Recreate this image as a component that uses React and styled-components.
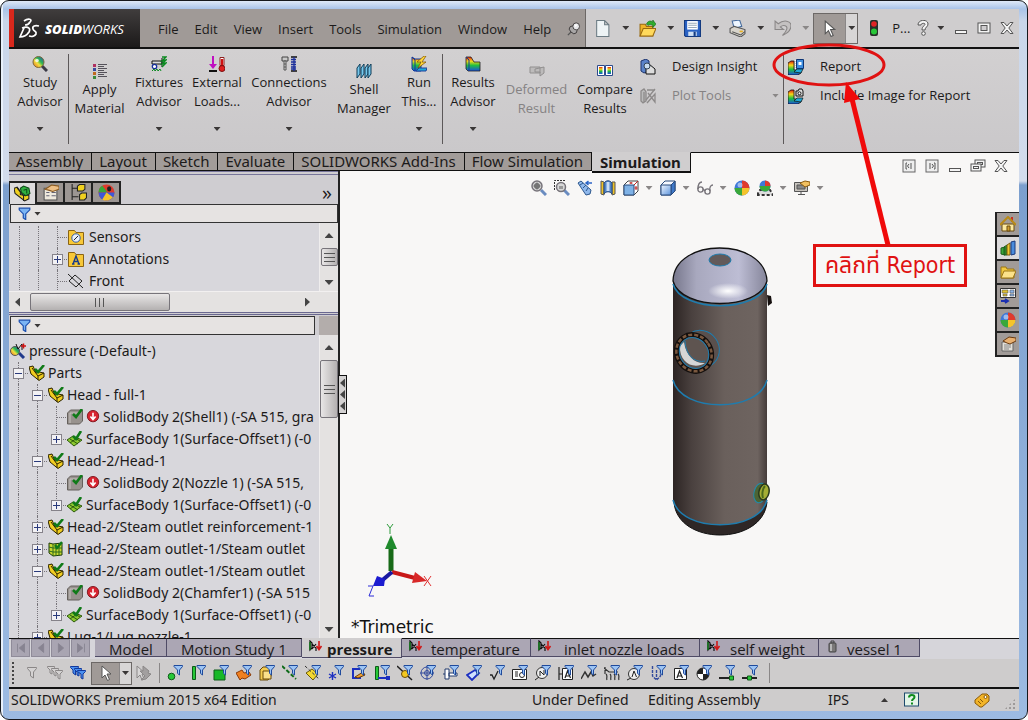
import React from 'react';
import styled, { createGlobalStyle, css } from 'styled-components';

const Global = createGlobalStyle`
  html, body, #root { height: 100%; }
  body { margin: 0; background: #fff; color: #1c1a1a; font: 14px/20px "Open Sans", "Noto Sans", sans-serif; }
  * { box-sizing: border-box; }
  button { font: inherit; color: inherit; border: 0; background: none; padding: 0; margin: 0; }
  svg { display: block; flex: none; }
`;

/* ---------- icons ---------- */

const Funnel = () => (
  <path d="M7 .5h8.500v1L12.500 5v5l-2-1.600V5L7 1.500z" fill="#9cc4f4" stroke="#1f4a9c" />
);

const icons = {
  study: <><path d="M10 10l5 5" stroke="#3b3b46" strokeWidth="3" /><circle cx="6.500" cy="6" r="5.500" fill="url(#rainbow)" stroke="#7a6a3a" /><circle cx="5" cy="4.500" r="1.800" fill="#fff" opacity=".8" /></>,
  material: <><path d="M6 1.500h9M6 5.500h9M6 9.500h9M6 13.500h9M6 3.500h6M6 7.500h6M6 11.500h6" stroke="#55525a" /><rect x="1" y="1" width="3" height="3" fill="#b03060" /><rect x="1" y="5" width="3" height="3" fill="#3a4aa0" /><rect x="1" y="9" width="3" height="3" fill="#c06a20" /><rect x="1" y="13" width="3" height="3" fill="#3a8a3a" /></>,
  fixtures: <><path d="M1 5h10v3H1zM11 2v9" fill="#ddd" stroke="#111" /><path d="M11 1h4l-4 4 4-1-4 4 4-1-4 4" fill="none" stroke="#0b8a20" strokeWidth="1.400" /><circle cx="3.500" cy="10.500" r="2.200" fill="#fff" stroke="#16309c" strokeWidth="1.300" /><path d="M1 15l2-2 1 2 2-2 1 2 2-2 1 2" fill="none" stroke="#0b8a20" /></>,
  loads: <><path d="M4 0v10" stroke="#c010c0" strokeWidth="2" /><path d="M0 8h8l-4 5z" fill="#c010c0" /><path d="M0 15h8" stroke="#111" strokeWidth="2" /><path d="M11 1.500h4v8h-4z" fill="#fff" stroke="#8a2020" /><path d="M13 3v8" stroke="#d01010" strokeWidth="2.400" /><circle cx="13" cy="12.500" r="3" fill="#e02020" stroke="#7a1010" /></>,
  connections: <><path d="M1 1h6v4H1z" fill="#c9c9c9" stroke="#444" /><path d="M3 5h2v9H3zM3 8h2M3 11h2" fill="#ddd" stroke="#555" /><path d="M10 1h6M10 15h6" stroke="#111" strokeWidth="1.500" /><path d="M13 1v14M10 3.500h5M10 6h5M10 8.500h5M10 11h5M10 13h5" stroke="#1c2f9c" strokeWidth="1.300" /></>,
  shell: <g fill="#76c8ec" stroke="#0e3b57"><path d="M1 5l3-4v10l-3 4z" /><path d="M5 5l3-4v10l-3 4z" /><path d="M9 5l3-4v10l-3 4z" /><path d="M12 5l3-4v10l-3 4z" /></g>,
  run: <><path d="M1 1l3 2h6v12H3l-2-2z" fill="url(#heat)" stroke="#103a9c" /><path d="M5 15h10l1-3H8z" fill="#1ea8d8" stroke="#20409c" /><path d="M1 1l3 3v11" fill="none" stroke="#103a9c" /><path d="M13 0L6 6h4l-3 6 8-6h-4l4-6z" fill="#ffd83a" stroke="#7a4a00" strokeWidth=".7" /></>,
  results: <><path d="M1 1h5l3 5h6v9H3l-2-2z" fill="url(#heat)" stroke="#222" strokeWidth=".8" /><path d="M1 1l3 3v11" fill="none" stroke="#123a9c" /></>,
  deformed: <path d="M1 4h10v6H1zM6 6l9-2v6l-4 3v-4L6 9z" fill="#bdbbbb" stroke="#918f8f" />,
  compare: <><path d="M.5 2.500h7v10h-7zM8.500 2.500h7v10h-7z" fill="#fff" stroke="#2c4a8c" /><rect x="2" y="4" width="3.500" height="7" fill="url(#heat)" /><rect x="10.500" y="4" width="3.500" height="7" fill="url(#heat)" /></>,
  insight: <><path d="M1 2l5-2 3 2v10l-5 2-3-2z" fill="#5a82c8" stroke="#1c326c" /><path d="M6 8l3-3 6 5v5H6z" fill="#ddd" stroke="#111" /><circle cx="7" cy="7" r="3" fill="#c8dcf0" stroke="#345" /></>,
  plottools: <g stroke="#8d8a8a" fill="none" strokeWidth="1.300"><path d="M1 3l3-2 2 3v9l-3 2-2-2zM4 4v10" fill="#bbb" /><path d="M7 15l8-9v8l-7-9M7 2h8M15 1L6 12" /></g>,
  report: <><path d="M0 4l3-2h3v9h7v3l-3 2H0z" fill="url(#heat)" stroke="#111" strokeWidth=".8" /><path d="M6 13l3-3h6l-2 4z" fill="#1ea8d8" stroke="#111" strokeWidth=".7" /><path d="M8.500.5h7v9h-7z" fill="#3f8fe0" stroke="#0c3474" /><path d="M10.500 3h3v3h-3z" fill="#fff" /><path d="M7.500 1v9" stroke="#fff" strokeDasharray="1 1" /></>,
  image: <><path d="M0 4l3-2h3v9h7v3l-3 2H0z" fill="url(#heat)" stroke="#111" strokeWidth=".8" /><path d="M6 13l3-3h6l-2 4z" fill="#1ea8d8" stroke="#111" strokeWidth=".7" /><path d="M8 3h2l1-2h3l1 2v5H8z" fill="#ddd" stroke="#111" /><circle cx="11.500" cy="5.300" r="1.500" fill="#fff" stroke="#111" /></>,
  pin: <><path d="M1 15l5-5" stroke="#555" strokeWidth="1.500" /><ellipse cx="7" cy="9" rx="5" ry="3.500" transform="rotate(45 7 9)" fill="#a8a6a6" stroke="#3a3737" /><ellipse cx="10.500" cy="5" rx="3.800" ry="4" fill="#e8e8ea" stroke="#3a3737" /><path d="M9 5l2-2" stroke="#fff" strokeWidth="2" /></>,
  newdoc: <path d="M2.500.5H10l4 4v11H2.500zM10 .5v4h4" fill="#eef4f6" stroke="#6c7c84" />,
  open: <><path d="M1 4h5l1 2h6v9H1z" fill="#f0b428" stroke="#9a6a10" /><path d="M1 15l3-7h12l-3 7z" fill="#ffd95c" stroke="#9a6a10" /><path d="M7 4c1-3 4-4 6-2V0l3 4-3 3V5c-2-1-3-1-4 0z" fill="#2fae2f" stroke="#146a14" strokeWidth=".6" /></>,
  save: <><path d="M.5.5h15v15h-14l-1-1z" fill="#2a62c4" stroke="#143a80" /><path d="M3 1h10v8H3z" fill="#fff" /><path d="M4 3h8M4 5h8M4 7h8" stroke="#9ab" /><path d="M4 11h8v4H4z" fill="#cfe0f4" /><path d="M9 11h2v4H9z" fill="#143a80" /></>,
  print: <><path d="M3 1l7-1 2 6-7 2z" fill="#eef6ff" stroke="#456a9c" /><path d="M1 8l4-2 10 3v4l-4 3-10-4z" fill="#d8d4cc" stroke="#555" /><path d="M3 11l8 3 4-3" stroke="#555" fill="none" /><rect x="10" y="10" width="3" height="1.500" fill="#e8b020" /></>,
  undo: <path d="M1 1v8h8L6 6.500c3-2.500 7-1 6 2-.5 2-2 4-4 6 5-2 8-5 8-9 0-5-7-6-12-2z" fill="#c4c1c1" stroke="#8a8787" />,
  cursor: <path d="M4 1v12l3-3 2.500 5.500 2-1L9 9h4z" fill="#fff" stroke="#555" />,
  cursors: <g fill="#a29f9f" stroke="#8a8787"><path d="M1 1v12l3-3 2 5 2-1-2-5h4z" fill="#d8d6d6" /><path d="M7 1v5H4l5 5-4 4 5-1 5-5-3-1 1-2z" /></g>,
  traffic: <><rect x="4" y="0" width="8" height="16" rx="2" fill="#26302a" /><circle cx="8" cy="4" r="2.800" fill="#e02424" /><circle cx="8" cy="11.500" r="3" fill="#28c838" /></>,
  help: <><path d="M3 5c0-6 10-6 10-1 0 3-3 3-3 6H7c0-4 3-4 3-6 0-1-4-1-4 1z" fill="#f4f4f4" stroke="#555" /><circle cx="8.500" cy="13.500" r="1.800" fill="#f4f4f4" stroke="#555" /></>,
  min: <rect x="2.500" y="10.500" width="11" height="3" fill="#f4f4f4" stroke="#555" />,
  max: <><rect x="2" y="3" width="12" height="10" fill="#f4f4f4" stroke="#555" /><rect x="5" y="5.500" width="6" height="5" fill="#cfcdcf" stroke="#555" /></>,
  close: <path d="M2 2.500h3L8 6l3-3.500h3L9.800 8l4.200 5.500h-3L8 10l-3 3.500H2L6.200 8z" fill="#f4f4f4" stroke="#555" />,
  paneL: <><rect x="2" y="2" width="12" height="12" fill="#eee" stroke="#666" /><path d="M6 5H5v6h1M10 5v6M8 6L6.500 8 8 10" fill="none" stroke="#555" /></>,
  paneR: <><rect x="2" y="2" width="12" height="12" fill="#eee" stroke="#666" /><path d="M10 5h1v6h-1M6 5v6M8 6l1.500 2L8 10" fill="none" stroke="#555" /></>,
  restore: <g fill="#f4f4f4" stroke="#555"><rect x="5" y="2" width="10" height="7" /><rect x="7.500" y="4.500" width="5" height="2" /><rect x="1" y="6" width="10" height="7" /><rect x="3.500" y="8.500" width="5" height="2" /></g>,
  zoomfit: <><path d="M10 10l5 5" stroke="#6a8cc0" strokeWidth="3" /><circle cx="6" cy="6" r="5" fill="#d8d8d8" stroke="#77747a" strokeWidth="1.500" /><path d="M4 4h4v4H4zM6 2.500v7M2.500 6h7" stroke="#555" fill="none" /></>,
  zoomarea: <><path d="M10 10l5 5" stroke="#6a8cc0" strokeWidth="3" /><circle cx="7" cy="7" r="4.500" fill="#d8d8d8" stroke="#77747a" strokeWidth="1.500" /><path d="M.5 10V.5H12" fill="none" stroke="#333" strokeDasharray="2 1" /><path d="M5 6h4v3H5z" fill="#999" /></>,
  prev: <><path d="M1 3l3-2 10 9-1 4-4 1z" fill="#8fb8ec" stroke="#2c568c" /><path d="M3 5l3-2M6 8l3-3M9 11l2-3" stroke="#2c568c" /><path d="M15 3H10M11.500 1L9 3l2.500 2" fill="none" stroke="#2c66c8" strokeWidth="1.500" /></>,
  section: <><path d="M1 1l3 1v13l-3-1zM12 2h3v12l-3 1z" fill="#f0c428" stroke="#555" /><path d="M4 3c2-3 6-3 8 0v11c-2-3-6-3-8 0z" fill="#4f83c8" stroke="#284a7c" /><path d="M8 2v9" stroke="#c8dcf4" strokeWidth="3" /></>,
  orient: <><path d="M1 5l4-4h10v10l-4 4H1z" fill="#fff" stroke="#444" /><path d="M1 5h10v10H1z" fill="#7fb2e6" stroke="#284a7c" /><path d="M11 5l4-4M8 2v2M13 6v4M11.500 8h3M6.500 3h3" stroke="#c02020" /></>,
  cube: <><path d="M1 5l4-4h10v10l-4 4H1z" fill="#f6f9ff" stroke="#284a7c" /><path d="M11 5l4-4v10l-4 4z" fill="#3f78c8" stroke="#284a7c" /><path d="M1 5h10v10H1z" fill="url(#sheen)" stroke="#284a7c" /></>,
  glasses: <g fill="none" stroke="#77747a" strokeWidth="1.400"><circle cx="3.500" cy="9.500" r="2.600" /><circle cx="10.500" cy="11.500" r="2.600" /><path d="M1 9c0-4 1-7 4-7M6 9l2 2M13 11c-1-4 1-6 3-6" /></g>,
  ball: <><circle cx="8" cy="8" r="7.500" fill="#3f78d8" /><path d="M8 8V.5A7.500 7.500 0 0115.500 8z" fill="#e03a2c" /><path d="M8 8h7.500A7.500 7.500 0 018 15.500z" fill="#f4c42c" /><path d="M8 8v7.500A7.500 7.500 0 01.5 8z" fill="#3aa83a" /><circle cx="6" cy="5" r="2.500" fill="#fff" opacity=".5" /></>,
  scene: <><path d="M0 15l3-5h10l3 5z" fill="#ddd" stroke="#333" strokeDasharray="3 2" strokeWidth="2" /><circle cx="8" cy="6" r="5.500" fill="#3f78d8" /><path d="M8 6V.5A5.500 5.500 0 0113.500 6z" fill="#e03a2c" /><path d="M8 6v5.500A5.500 5.500 0 012.500 6zM8 6h5.500A5.500 5.500 0 018 11.500z" fill="#3aa83a" /></>,
  display: <><path d="M.5 2.500h13v9H.5z" fill="#c8c4be" stroke="#555" /><path d="M3 5h8v4H3zM4 14.500h7M7 11v3" fill="#888" stroke="#555" /><path d="M6 3l5-2 5 1v3l-5 2z" fill="#f2c060" stroke="#8a5a10" /></>,
  feature: <><path d="M0 3l3-1 3 4v3l5 1 3-1v4l-4 2L1 8z" fill="#f0d020" stroke="#222" /><path d="M3 3l6 7v5" fill="none" stroke="#222" /><path d="M6 3l3-2 5 2 1 5-4 2-4-3z" fill="#30b040" stroke="#0e4a18" /><path d="M9 5l3-1v4" fill="none" stroke="#0e4a18" /></>,
  property: <><path d="M2 4h12v11H2z" fill="#efe9dc" stroke="#555" /><path d="M4 8h3M9 8h4M4 11h3M9 11h4" stroke="#667" /><path d="M3 5l6-4 7 1v3l-6 2-3-1z" fill="#eebf85" stroke="#8a5a20" /></>,
  config: <><path d="M2 0v15M2 4h5M2 12h6" stroke="#222" fill="none" /><path d="M7 2l2-1.500h5V5l-2 1.500H7z" fill="#f0d020" stroke="#222" /><path d="M9 10l2-1.500h4.500V13l-2 2H9z" fill="#f0d020" stroke="#222" /></>,
  appearance: <><circle cx="8" cy="8" r="7.500" fill="#e03a2c" /><path d="M.5 8A7.500 7.500 0 014 1.700L9 8z" fill="#3aa83a" /><path d="M.5 8h15A7.500 7.500 0 01.5 8z" fill="#3f58d8" /><path d="M8 8L4 14.500a7.500 7.500 0 0010-2z" fill="#f4c42c" /><ellipse cx="10.500" cy="4.500" rx="2" ry="2.500" fill="#222" /></>,
  funnel: <path d="M1.500 1.500h13v2l-5 5v7l-3-2v-5l-5-5z" fill="#7ab4f4" stroke="#1c50b0" strokeWidth="1.500" />,
  sensor: <><path d="M.5 3V1.500h6L8 3.500h7.500v12H.5z" fill="#f8c838" stroke="#8a6414" /><circle cx="8" cy="9" r="4.200" fill="#e8f0fa" stroke="#345a9c" /><path d="M6 11l4-4" stroke="#223" /></>,
  annot: <><path d="M.5 3V1.500h6L8 3.500h7.500v12H.5z" fill="#f8c838" stroke="#8a6414" /><path d="M5 13l3-8 3 8M6 10.500h4M4 13h2.500M9.500 13H12" fill="none" stroke="#173a8c" strokeWidth="1.400" /></>,
  plane: <path d="M1 8l6-6 7 6-6 6zM0 1l15 14" fill="none" stroke="#222" />,
  studyroot: <><path d="M9 10l5 5" stroke="#223a8c" strokeWidth="3" /><circle cx="5" cy="8" r="4.500" fill="url(#rainbow)" stroke="#555" /><path d="M6 1l2 5 4-5v6" stroke="#111" fill="none" /><path d="M11 3h5M13.500.5v5" stroke="#d01010" strokeWidth="1.500" /></>,
  part: <><path d="M0 2l4-1 3 7 3-1 5 1v4l-5 3.500L2 9z" fill="#f0cc20" stroke="#2c2400" /><path d="M3 3l6 8v4M9 11l6-3" fill="none" stroke="#2c2400" /><path d="M6 4l3 3 6-7" fill="none" stroke="#107a18" strokeWidth="2.600" /></>,
  solid: <><path d="M.5 4l3-3h12v11l-3 3H.5z" fill="#98928e" stroke="#65605c" /><path d="M3 4v10M3 4h9" stroke="#c8c4c0" /><path d="M6 5l3 3 6-8" fill="none" stroke="#107a18" strokeWidth="2.600" /></>,
  surface: <><path d="M0 9l6-4 9 4-8 6z" fill="#8cc830" stroke="#2c5a0c" /><path d="M3 8l8 5M6 6l7 4M3 12l7-5" stroke="#2c5a0c" /><path d="M6 5l3 3 5-8" fill="none" stroke="#107a18" strokeWidth="2.600" /></>,
  mesh: <><path d="M1 2l4 1 9-1v12l-9 1-4-3z" fill="#c8d830" stroke="#1c3a0c" /><path d="M1 6l4 1h9M1 10l4 1h9M5 3v12M8 3v12M11 3v12" stroke="#2c6a1c" fill="none" /><path d="M7 4l2 3 5-6" fill="none" stroke="#107a18" strokeWidth="2.400" /></>,
  down: <><circle cx="8" cy="7" r="6.500" fill="#d82430" stroke="#7a1018" /><path d="M8 3v7M5 7.500L8 11l3-3.500" fill="none" stroke="#fff" strokeWidth="1.800" /></>,
  studytab: <><path d="M2 1v9l2-2V3zM4 4l4 4v3M8 4l-4 5" fill="none" stroke="#111" strokeWidth="1.200" /><path d="M2 2v8" stroke="#107a18" strokeWidth="1.500" /><path d="M11 1v8M8.500 6L11 9.500 13.500 6" fill="none" stroke="#d01818" strokeWidth="1.600" /></>,
  vesseltab: <><path d="M6 1h3v2H6z" fill="none" stroke="#444" /><rect x="4" y="3" width="7" height="9" rx="1" fill="#7a7878" stroke="#444" /><path d="M6 4v7" stroke="#ccc" strokeWidth="1.500" /></>,
  home: <><path d="M2 8h12v7H2z" fill="#fbe9a0" stroke="#6a4a10" /><path d="M11 1h2v5h-2z" fill="#c83020" /><path d="M0 9l8-8 8 8" fill="none" stroke="#b88a18" strokeWidth="2" /><path d="M7 10h3v5H7z" fill="#d0a030" stroke="#6a4a10" /></>,
  library: <><path d="M1 8l4-1v8l-4-1zM4 7l3-2v10H4z" fill="#3aa83a" stroke="#1c5a1c" /><path d="M7 5l3-2v12H7z" fill="#f0c830" stroke="#7a5a10" /><path d="M11 2l4-1v13l-4 1z" fill="#4a8cdc" stroke="#1c3a7c" /></>,
  folder: <><path d="M1 3h5l1 2h7v9H1z" fill="#f0c840" stroke="#9a7414" /><path d="M1 14l3-7h12l-3 7z" fill="#fbe28a" stroke="#9a7414" /></>,
  palette: <><path d="M.5.5h15v9H.5z" fill="#fff" stroke="#333" /><path d="M2 2h6v3H2zM3 6h4v2H3z" fill="#e0c030" stroke="#555" strokeWidth=".6" /><path d="M10 2h4v3h-4zM10 6h4v2h-4z" fill="#8ab4e8" stroke="#555" strokeWidth=".6" /><path d="M1 13h6M5 11l3 2-3 2" stroke="#1c2fb0" strokeWidth="1.800" fill="none" /></>,
  custom: <><path d="M2 6h11v9H2z" fill="#e4e0d8" stroke="#666" /><path d="M4 9h7M4 11h7M4 13h5" stroke="#888" /><path d="M3 5l6-4 7 1v3l-6 3-3-1z" fill="#e8b070" stroke="#6a3a10" /></>,
  fgray: <path d="M3.500 2.500h9v1L9.500 7v6l-3-2V7l-3-3.500z" fill="#d4d2d2" stroke="#8a8787" />,
  fgray2: <g fill="#d4d2d2" stroke="#8a8787"><path d="M.5 1.500h7v1L5 5v4L3 8V5L.5 2.500z" /><path d="M4.500 3.500h7v1L9 7v4l-2-1V7L4.500 4.500z" /><path d="M8.500 5.500h7v1L13 9v5l-2-1V9L8.500 6.500z" /></g>,
  fblue: <g fill="#4a90f0" stroke="#12389c"><path d="M.5 1.500h8v1L5.500 5v5L3 8V5L.5 2.500z" /><path d="M4.500 3.500h7v1L9 7v4l-2-1V7L4.500 4.500z" /><path d="M7.500 5.500h8v1L13 9v5l-2-1V9L7.500 6.500z" /></g>,
  helpbox: <><rect x=".5" y="1" width="14" height="13" fill="#e4f4e8" stroke="#1c4a6c" /><path d="M5 5.500c0-3.500 5.500-3 5.500-.5C10.500 7 8 7 8 9" fill="none" stroke="#0e8a1c" strokeWidth="2" /><path d="M7 10.500h2v2H7z" fill="#0e8a1c" /></>,
  tag: <><path d="M1 8l7-6h5l2 2v5l-7 6H6L1 11z" fill="#f2b428" stroke="#8a5a08" /><circle cx="11.500" cy="5" r="1.500" fill="#fff" stroke="#8a5a08" /><path d="M4 9l3 3M6 7l3 3" stroke="#8a5a08" /></>,
};

/* what each selection filter picks, drawn under its funnel */
const filterBases = [
  <circle cx="4.500" cy="11.500" r="3.300" fill="#28c838" stroke="#0e5a18" />,
  <path d="M2.500 1.500h3v13h-3z" fill="#28c838" stroke="#0e5a18" />,
  <path d="M1 5h11v10H1z" fill="#18b828" stroke="#0e5a18" />,
  <path d="M0 8l6-3 2 3 5-1 2 3-6 4-3-1-2 2z" fill="#f08020" stroke="#8a3a08" />,
  <><path d="M1 5l3-3h8v9l-3 4H1z" fill="#f4cc50" stroke="#6a4a08" /><path d="M4 6h8v8H4z" fill="#fbe08a" stroke="#6a4a08" /></>,
  <path d="M0 1l14 13" stroke="#0e6a18" strokeWidth="2" strokeDasharray="4 2" />,
  <><path d="M1 8l6-4 6 5-5 6z" fill="#f4d830" stroke="#6a5a08" /><path d="M0 1l14 13" stroke="#333" strokeDasharray="3 2" /></>,
  <path d="M4.500 7v8M1 9l7 4M8 9l-7 4" stroke="#1c2fc0" strokeWidth="1.400" />,
  <><path d="M9 4H2v9h8" fill="none" stroke="#1c2fc0" strokeWidth="2" /><path d="M4 12l8-5 2 3-7 3z" fill="#f0a030" stroke="#6a3a08" /></>,
  <><path d="M1.500 1.500h3v13h-3z" fill="#28c838" stroke="#0e5a18" /><path d="M4 13h10" stroke="#1c2fc0" strokeWidth="2" /><path d="M12 11h4v4h-4z" fill="#1c2fc0" /></>,
  <><path d="M0 1l15 14" stroke="#222" strokeWidth="1.500" /><circle cx="8" cy="9" r="3.500" fill="#f4c820" stroke="#6a4a08" /></>,
  <g fill="none" stroke="#334a9c"><circle cx="7" cy="8" r="6" /><path d="M0 8h14M7 1v14" /><circle cx="7" cy="8" r="2.500" /></g>,
  <path d="M2 4h4v10H2zM6 8h8v3H6zM0 9h2" fill="#fff" stroke="#223a6c" />,
  <path d="M1 10l8-5 4 3-7 7z" fill="#cfe0ff" stroke="#1c2fc0" strokeWidth="1.800" />,
  <path d="M1 10h2l2 4 4-8" fill="none" stroke="#222" strokeWidth="1.300" />,
  <><path d="M.5 4.500h14v10H.5z" fill="#fff" stroke="#222" /><path d="M3 7h3M3 9h3M3 11h3" stroke="#222" /><circle cx="10" cy="10" r="2.500" fill="none" stroke="#222" /></>,
  <><circle cx="7" cy="8" r="5.500" fill="#eee" stroke="#333" /><path d="M5 11V6l4 4V5M0 15l4-3" fill="none" stroke="#222" /></>,
  <><path d="M4.500 3.500h10v11h-10z" fill="#fff" stroke="#222" /><path d="M1 2v13M1 9h4M7 13l2.500-7 3 7M8 11h3.500" fill="none" stroke="#222" strokeWidth="1.200" /></>,
  <path d="M0 14l4-7 3 5 3-5 2 4 3-2" fill="none" stroke="#333" strokeWidth="1.500" />,
  <path d="M0 3l5 4h9M2 9c2 2 0 4 1 6M6 9c2 2 0 4 1 6M10 9c2 2 0 4 1 6M14 9c2 2 0 4 1 6M1 2v7" fill="none" stroke="#333" strokeWidth="1.200" />,
  <><circle cx="7" cy="9" r="5.500" fill="#eee" stroke="#333" /><path d="M5 12l2-6 2.500 6M0 15l4-2" fill="none" stroke="#222" /></>,
  <path d="M2.500 1v10l4 4 4-4V1M6.500 5v9" fill="none" stroke="#334a9c" strokeWidth="1.400" strokeDasharray="3 1" />,
  <><path d="M1.500 3.500h12v11h-12z" fill="#fff" stroke="#222" /><path d="M4 13l2.500-7 3 7M5 11h4" fill="none" stroke="#222" strokeWidth="1.200" /></>,
  <><circle cx="7" cy="9" r="6" fill="#fff" stroke="#222" /><path d="M7 9V3a6 6 0 00-6 6zM7 9v6a6 6 0 006-6z" fill="#222" /></>,
  <><path d="M0 13h12" stroke="#222" strokeWidth="2" /><path d="M10.500 11h4v4h-4z" fill="#28c838" stroke="#0e5a18" /></>,
  <><path d="M0 13h15" stroke="#222" strokeWidth="2" /><path d="M5.500 11h4v4h-4z" fill="#28c838" stroke="#0e5a18" /></>,
];

const Icon = ({ name, size = 16 }) => (
  <svg width={size} height={size} viewBox="0 0 16 16" aria-hidden="true">{icons[name]}</svg>
);

const Defs = styled.svg`
  position: absolute;
`;
const Gradients = () => (
  <Defs width="0" height="0" aria-hidden="true">
    <defs>
      <linearGradient id="heat" x1="0" y1="0" x2="0" y2="1">
        <stop offset="0" stopColor="#e02010" /><stop offset=".3" stopColor="#f8d818" />
        <stop offset=".6" stopColor="#20c040" /><stop offset="1" stopColor="#1850e0" />
      </linearGradient>
      <linearGradient id="rainbow" x1="0" y1="1" x2="1" y2="0">
        <stop offset="0" stopColor="#e8601c" /><stop offset=".4" stopColor="#f0e040" />
        <stop offset=".6" stopColor="#30b850" /><stop offset="1" stopColor="#2040c0" />
      </linearGradient>
      <linearGradient id="sheen" x1="0" y1="0" x2="1" y2="1">
        <stop offset="0" stopColor="#f0f6ff" /><stop offset="1" stopColor="#5c94dc" />
      </linearGradient>
    </defs>
  </Defs>
);

const Caret = styled.span`
  flex: none;
  width: 7px;
  height: 4px;
  background: ${(p) => (p.$faint ? '#8a8787' : '#3a3737')};
  clip-path: polygon(0 0, 100% 0, 50% 100%);
`;

/* ---------- window frame ---------- */

const Window = styled.div`
  position: relative;
  height: 100vh;
  min-height: 560px;
  padding: 8px;
  border: 1px solid #16181c;
  border-radius: 9px;
  background:
    linear-gradient(90deg, #e8f0fa 0 2px, transparent 2px),
    linear-gradient(180deg, #dfe9f7 0, #a9c3e8 8px, #c9d6ea 20px, #d3dcec 180px, #7c9fce 184px, #9dbbe2 100%);
  display: flex;
`;
const Client = styled.div`
  flex: 1;
  min-width: 0;
  display: flex;
  flex-direction: column;
  background: #cecccd;
`;

/* ---------- title bar ---------- */

const TitleBar = styled.header`
  display: flex;
  height: 40px;
  border-bottom: 2px solid #111;
  background: #cfcdce;
  font-size: 13px;
`;
const Logo = styled.div`
  flex: none;
  width: 131px;
  display: flex;
  align-items: center;
  gap: 5px;
  padding: 2px 0 0 4px;
  border-left: 5px solid #d8281c;
  background: linear-gradient(#403d3d, #1c1a1a);
  color: #fff;
  font-size: 13px;
  font-style: italic;
  b { font-weight: 800; }
`;
const Menu = styled.nav`
  flex: none;
  display: flex;
  align-items: center;
  gap: 16px;
  padding: 1px 4px 0 18px;
  background: #a09a97;
  border-right: 1px solid #6c6866;
`;
const SplitButton = styled.div`
  display: flex;
  align-items: stretch;
  height: ${(p) => p.$h};
  border: 1px solid #6c6866;
  button { display: flex; align-items: center; justify-content: center; }
  button:first-child { width: ${(p) => p.$w}; background: #a09a97; }
  button:last-child { width: 12px; background: #d8d6d6; border-left: 1px solid #8a8787; }
`;
const Quick = styled.div`
  flex: 1;
  display: flex;
  align-items: center;
  gap: 10px;
  padding: 0 4px 0 8px;
  ${SplitButton} { margin: 0 -2px 0 -6px; }
`;
const IconDrop = styled.button`
  display: flex;
  align-items: center;
  gap: 11px;
`;
const WindowControls = styled.div`
  display: flex;
  align-items: center;
  gap: 7px;
  margin-left: auto;
`;
const HelpButton = styled.button`
  display: flex;
  align-items: center;
  gap: 6px;
  margin: 0 2px 0 -2px;
`;

/* ---------- ribbon ---------- */

const Ribbon = styled.section`
  display: flex;
  height: 103px;
  padding-left: 3px;
  background: linear-gradient(#d2d0d1, #cac8ca);
  font-size: 13px;
  line-height: 19px;
`;
const Rule = styled.span`
  width: 1px;
  height: 90px;
  margin-top: 5px;
  background: #5c5859;
`;
const Big = styled.button`
  width: ${(p) => p.$w}px;
  padding-top: ${(p) => (p.$drop ? 7 : 14)}px;
  display: flex;
  flex-direction: column;
  align-items: center;
  white-space: pre;
  color: ${(p) => (p.$off ? '#858283' : 'inherit')};
  span { margin-top: 1px; }
  i { margin-top: 16px; }
`;
const Stack = styled.div`
  width: ${(p) => (p.$w ? `${p.$w}px` : 'auto')};
  padding: 3px 4px 0 ${(p) => (p.$w ? 0 : 4)}px;
  display: flex;
  flex-direction: column;
`;
const Line = styled.button`
  display: flex;
  align-items: center;
  gap: 16px;
  height: 29px;
  white-space: nowrap;
  color: ${(p) => (p.$off ? '#858283' : 'inherit')};
  i { margin-left: auto; }
`;

const bigs = [
  ['study', 'Study\nAdvisor', 56, true], null,
  ['material', 'Apply\nMaterial', 61, false], ['fixtures', 'Fixtures\nAdvisor', 58, true],
  ['loads', 'External\nLoads...', 58, true], ['connections', 'Connections\nAdvisor', 86, true],
  ['shell', 'Shell\nManager', 64, false], ['run', 'Run\nThis...', 46, true], null,
  ['results', 'Results\nAdvisor', 60, true], ['deformed', 'Deformed\nResult', 67, false, true],
  ['compare', 'Compare\nResults', 70, false],
];

/* ---------- command tabs ---------- */

const TabRow = styled.div`
  display: flex;
  height: 19px;
  background: #f8f7f6;
  box-shadow: inset 0 1px #111;
  font: 15px/17px "Noto Sans", sans-serif;
  position: relative;
  z-index: 2;
`;
const Tab = styled.button`
  height: 19px;
  padding: 0 8px 0 7px;
  white-space: nowrap;
  background: #a29c99;
  border: solid #111;
  border-width: 1px 1px 1px 0;
  ${(p) => p.$on && css`
    height: 21px;
    padding: 0 9px 0 8px;
    background: #d0cecf;
    border-top-color: #d0cecf;
    border-bottom-width: 2px;
    font-weight: 700;
  `}
`;
const DocControls = styled.div`
  display: flex;
  gap: 7px;
  height: 16px;
  margin: 6px 10px 0 auto;
`;

/* ---------- body ---------- */

const Body = styled.main`
  flex: 1;
  min-height: 0;
  display: flex;
`;
const Panel = styled.aside`
  position: relative;
  width: 331px;
  display: flex;
  flex-direction: column;
  background: #cfcdd1;
  border-right: 2px solid #222;
`;
const ManagerTabs = styled.div`
  display: flex;
  height: 33px;
  padding: 6px 6px 0 0;
  border-top: 4px double #77759a;
`;
const ManagerTab = styled.button`
  width: 28px;
  height: 23px;
  display: grid;
  place-items: center;
  background: ${(p) => (p.$on ? '#dddbdc' : '#9c9693')};
  border: 2px solid #222;
  border-left-width: ${(p) => (p.$on ? 1 : 0)}px;
  border-bottom-width: ${(p) => (p.$on ? 0 : 2)}px;
`;
const More = styled.button`
  margin-left: auto;
  font-size: 20px;
  line-height: 16px;
`;
const FilterBox = styled.label`
  display: flex;
  align-items: center;
  gap: 3px;
  flex: 1;
  height: 19px;
  padding-left: 7px;
  background: #e6e3e2;
  border: 1px solid #333;
  input { flex: 1; min-width: 0; border: 0; background: none; outline: 0; }
`;
const FilterLine = styled.div`
  flex: none;
  display: flex;
  gap: 4px;
  padding-left: 1px;
  &::after { content: ''; display: ${(p) => (p.$stub ? 'block' : 'none')}; width: 19px; background: #b3adab; }
`;
const Split = styled.div`
  flex: none;
  height: 4px;
  border-top: 3px double #6a6890;
`;
const Pane = styled.div`
  flex: ${(p) => (p.$h ? 'none' : 1)};
  height: ${(p) => (p.$h ? `${p.$h}px` : 'auto')};
  min-height: 0;
  display: flex;
`;
const Tree = styled.ul`
  flex: 1;
  min-width: 0;
  margin: 0;
  padding: ${(p) => (p.$inset ? '3px 2px 0 1px' : '5px 1px 0 0')};
  list-style: none;
  overflow: hidden;
  background: #d8d7dc;
  font-family: "Noto Sans", sans-serif;
`;
const Row = styled.li`
  display: flex;
  align-items: center;
  height: 22px;
  white-space: nowrap;
  overflow: hidden;
  padding-left: ${(p) => (p.$root ? 1 : 0)}px;
  svg { margin-right: ${(p) => (p.$wide ? 5 : 3)}px; }
`;
const Guide = styled.span`
  position: relative;
  flex: none;
  width: 19px;
  height: 22px;
  display: grid;
  place-items: center;
  margin-right: ${(p) => (p.$branch ? 1 : 0)}px;
  &::before {
    content: '';
    position: absolute;
    left: 9px;
    top: 0;
    height: ${(p) => (p.$end ? '50%' : '100%')};
    border-left: 1px dotted #77747a;
  }
  &::after {
    content: '';
    position: absolute;
    display: ${(p) => (p.$branch ? 'block' : 'none')};
    left: 10px;
    right: 0;
    top: 11px;
    border-top: 1px dotted #77747a;
  }
`;
const Toggle = styled.button`
  position: relative;
  z-index: 1;
  width: 11px;
  height: 11px;
  border: 1px solid #85828a;
  background:
    linear-gradient(#2a3a7c, #2a3a7c) center / 7px 1px no-repeat,
    linear-gradient(#2a3a7c, #2a3a7c) center / 1px ${(p) => (p.$open ? '0' : '7px')} no-repeat,
    #f2f1f4;
`;

const VScroll = styled.div`
  width: 19px;
  display: flex;
  flex-direction: column;
  align-items: center;
  padding: 10px 0 6px;
  background: #e4e2e1;
  border-left: 1px solid #efeded;
`;
const HScroll = styled.div`
  display: flex;
  align-items: center;
  flex: none;
  height: 21px;
  padding: 0 28px 0 6px;
  gap: 10px;
  background: #e4e2e1;
  border-top: 1px solid #f2f0f0;
`;
const Arrow = styled.span`
  flex: none;
  background: #444;
  width: ${(p) => (p.$v ? 9 : 5)}px;
  height: ${(p) => (p.$v ? 5 : 9)}px;
  clip-path: ${(p) => ({
    up: 'polygon(50% 0, 100% 100%, 0 100%)',
    down: 'polygon(0 0, 100% 0, 50% 100%)',
    left: 'polygon(100% 0, 100% 100%, 0 50%)',
    right: 'polygon(0 0, 100% 50%, 0 100%)',
  }[p.$to])};
  ${(p) => p.$last && (p.$v ? 'margin-top: auto;' : 'margin-left: auto;')}
`;
const Thumb = styled.span`
  flex: none;
  display: grid;
  place-items: center;
  width: ${(p) => p.$w}px;
  height: ${(p) => p.$h}px;
  margin-top: ${(p) => (p.$v ? 10 : 0)}px;
  border: 1px solid #77747a;
  border-radius: 2px;
  background: linear-gradient(${(p) => (p.$v ? '90deg' : '180deg')}, #e8e6e6, #b4b1b1);
  &::before {
    content: '';
    width: 11px;
    height: 9px;
    background: repeating-linear-gradient(${(p) => (p.$v ? '180deg' : '90deg')}, #555 0 1px, transparent 1px 4px);
  }
`;
const Collapse = styled.button`
  position: absolute;
  z-index: 2;
  left: 329px;
  top: 204px;
  width: 9px;
  height: 39px;
  display: flex;
  flex-direction: column;
  align-items: center;
  justify-content: space-evenly;
  background: #d4d2d2;
  border: 1px solid #111;
`;

/* ---------- graphics area ---------- */

const Viewport = styled.section`
  position: relative;
  flex: 1;
  min-width: 0;
  overflow: hidden;
  background: #f8f7f6;
`;
const HeadsUp = styled.div`
  display: flex;
  align-items: center;
  justify-content: center;
  gap: 7px;
  padding: 9px 5px 0 0;
`;
const Model = styled.svg`
  position: absolute;
  left: 332px;
  top: 76px;
`;
const Triad = styled.svg`
  position: absolute;
  left: 23px;
  bottom: 38px;
`;
const ViewName = styled.div`
  position: absolute;
  left: 11px;
  bottom: 0;
  font: 17px/22px "DejaVu Sans", sans-serif;
  color: #111;
`;
const TaskPane = styled.div`
  position: absolute;
  right: 0;
  top: 41px;
  border: solid #222;
  border-width: 1px 0 0 2px;
`;
const TaskTab = styled.button`
  display: grid;
  place-items: center;
  width: 22px;
  height: 24px;
  background: ${(p) => (p.$on ? '#dcdadb' : '#a19b98')};
  border-bottom: 2px solid #222;
`;

/* ---------- bottom ---------- */

const StudyTabs = styled.div`
  display: flex;
  height: 21px;
  background: #d6d5da;
  box-shadow: inset 0 1px #111;
  font-size: 15px;
  line-height: 20px;
`;
const NavButtons = styled.div`
  display: flex;
  gap: 1px;
  margin: 1px 5px 2px 2px;
  button { display: grid; place-items: center; width: 19px; height: 18px; background: #a9a5b2; border: 1px solid #8f8b99; }
`;
const StudyTab = styled.button`
  display: flex;
  width: ${(p) => p.$w}px;
  height: 19px;
  padding-left: ${(p) => (p.$icon ? 6 : 14)}px;
  gap: ${(p) => p.$gap || 0}px;
  white-space: nowrap;
  background: #aba6b4;
  border: solid #4f4b66;
  border-width: 1px 1px 1px 0;
  border-top-color: #111;
  svg { margin-top: 1px; }
  ${(p) => p.$on && css`
    height: 20px;
    background: #d0cecf;
    border-top-color: #d0cecf;
    font-weight: 700;
  `}
`;
const FilterBar = styled.div`
  display: flex;
  align-items: center;
  gap: 7px;
  height: 30px;
  padding-left: 19px;
  background: #cecccc;
  border-bottom: 2px solid #111;
  ${SplitButton} { margin: 0 -3px 0 -2px; }
  > :last-child { margin-left: 4px; }
`;
const Grip = styled.span`
  width: 2px;
  height: 22px;
  margin: 0 3px 0 -16px;
  background: repeating-linear-gradient(#444 0 2px, transparent 2px 4px);
`;
const Divider = styled.span`
  width: 1px;
  height: 20px;
  background: #8a8787;
`;
const Status = styled.footer`
  display: grid;
  grid-template-columns: minmax(0, 1fr) 116px 180px 191px;
  align-items: center;
  height: 22px;
  padding-left: 2px;
  background: #cecccc;
  white-space: nowrap;
  font-family: "Noto Sans", sans-serif;
`;
const StatusEnd = styled.div`
  display: flex;
  align-items: center;
  gap: 20px;
  padding-right: 3px;
  i { margin: 0 -4px 0 12px; transform: rotate(180deg); }
`;
const SizeGrip = styled.span`
  width: 12px;
  height: 12px;
  align-self: end;
  margin-left: -6px;
  background: radial-gradient(circle, #9c9999 1px, transparent 1px) 0 0 / 4px 4px;
  clip-path: polygon(100% 0, 100% 100%, 0 100%);
`;
const TagSlot = styled.span`
  margin-left: auto;
`;

/* ---------- annotation ---------- */

const Markup = styled.svg`
  position: absolute;
  z-index: 5;
  left: 0;
  top: 0;
  pointer-events: none;
`;
const Callout = styled.div`
  position: absolute;
  z-index: 6;
  left: 812px;
  top: 243px;
  width: 154px;
  height: 43px;
  border: 3px solid #e01212;
  background: #f8f7f6;
  color: #e01212;
  text-align: center;
  white-space: nowrap;
  font: 23px/36px "DejaVu Sans Condensed", "Noto Sans Thai", "Noto Sans", sans-serif;
`;

const tree = [
  { l: 'pressure (-Default-)', d: 0, ic: ['studyroot'] },
  { l: 'Parts', d: 1, t: 'open', ic: ['part'] },
  { l: 'Head - full-1', d: 2, t: 'open', ic: ['part'] },
  { l: 'SolidBody 2(Shell1) (-SA 515, gra', d: 3, ic: ['solid', 'down'] },
  { l: 'SurfaceBody 1(Surface-Offset1) (-0', d: 3, t: 'shut', end: true, ic: ['surface'] },
  { l: 'Head-2/Head-1', d: 2, t: 'open', ic: ['part'] },
  { l: 'SolidBody 2(Nozzle 1) (-SA 515,', d: 3, ic: ['solid', 'down'] },
  { l: 'SurfaceBody 1(Surface-Offset1) (-0', d: 3, t: 'shut', end: true, ic: ['surface'] },
  { l: 'Head-2/Steam outlet reinforcement-1', d: 2, t: 'shut', ic: ['part'] },
  { l: 'Head-2/Steam outlet-1/Steam outlet', d: 2, t: 'shut', ic: ['mesh'] },
  { l: 'Head-2/Steam outlet-1/Steam outlet', d: 2, t: 'open', ic: ['part'] },
  { l: 'SolidBody 2(Chamfer1) (-SA 515', d: 3, ic: ['solid', 'down'] },
  { l: 'SurfaceBody 1(Surface-Offset1) (-0', d: 3, t: 'shut', end: true, ic: ['surface'] },
  { l: 'Lug-1/Lug nozzle-1', d: 2, t: 'shut', ic: ['part'] },
];
const features = [
  { l: 'Sensors', d: 3, ic: ['sensor'] },
  { l: 'Annotations', d: 3, t: 'shut', ic: ['annot'] },
  { l: 'Front', d: 3, ic: ['plane'] },
];

const TreeRow = ({ item, wide }) => (
  <Row $wide={wide} $root={item.d === 0}>
    {Array.from({ length: item.d }, (_, i) => {
      const own = i === item.d - 1;
      return (
        <Guide key={i} $branch={own} $end={own && item.end}>
          {own && item.t && <Toggle $open={item.t === 'open'} aria-label={`Toggle ${item.l}`} />}
        </Guide>
      );
    })}
    {item.ic.map((n) => <Icon key={n} name={n} size={n === 'down' ? 14 : 16} />)}
    {item.l}
  </Row>
);

const studies = [
  ['Model', 72], ['Motion Study 1', 135], ['pressure', 100, 'studytab', 3, true],
  ['temperature', 129, 'studytab', 7], ['inlet nozzle loads', 169, 'studytab', 11],
  ['self weight', 119, 'studytab', 8], ['vessel 1', 101, 'vesseltab', 6],
];

const Vessel = () => (
  <Model width="104" height="292" viewBox="0 0 104 292" aria-label="Pressure vessel model">
    <defs>
      <linearGradient id="shell" x1="0" x2="1">
        <stop offset="0" stopColor="#2c2423" /><stop offset=".2" stopColor="#4a413f" />
        <stop offset=".55" stopColor="#6a605c" /><stop offset=".9" stopColor="#6e6460" /><stop offset="1" stopColor="#453c3a" />
      </linearGradient>
      <linearGradient id="dome" x1="0" x2="1">
        <stop offset="0" stopColor="#77778c" /><stop offset=".25" stopColor="#a8a8be" />
        <stop offset=".7" stopColor="#bdbdd4" /><stop offset="1" stopColor="#85859a" />
      </linearGradient>
      <radialGradient id="shine"><stop offset="0" stopColor="#fff" /><stop offset="1" stopColor="#fff" stopOpacity="0" /></radialGradient>
    </defs>
    <path d="M2 255C5 299 91 299 95 255z" fill="#2e2726" stroke="#111" />
    <path d="M1 35V253C9 286 87 286 95 253V35z" fill="url(#shell)" />
    <path d="M1 34C2-10 93-10 95 34C87 64 9 64 1 34z" fill="url(#dome)" stroke="#111" strokeWidth="1.300" />
    <ellipse cx="56" cy="44" rx="20" ry="8" fill="url(#shine)" />
    <ellipse cx="48" cy="13" rx="11" ry="6" fill="#625a5a" stroke="#1f7cae" />
    <path d="M1 37C9 66 87 66 95 37M1 133C9 166 87 166 95 133M1 253C9 286 87 286 95 253" fill="none" stroke="#1f7cae" strokeWidth="1.500" />
    <path d="M95 48l4 1 1 7-4 3z" fill="#16100f" />
    <ellipse cx="29" cy="102" rx="18" ry="19" fill="#5a504d" stroke="#1f7cae" transform="rotate(-35 29 102)" />
    <g transform="rotate(-35 22 106)">
      <ellipse cx="22" cy="106" rx="17" ry="19" fill="#5e5450" stroke="#15100e" strokeWidth="5" />
      <ellipse cx="22" cy="106" rx="17" ry="19" fill="none" stroke="#7a583f" strokeWidth="2.500" strokeDasharray="4 2" />
    </g>
    <path d="M8 99C7 116 22 123 33 116C24 117 14 110 12 95z" fill="#d6d6d6" />
    <path d="M13 94C14 110 24 116 33 114" fill="none" stroke="#1f7cae" />
    <ellipse cx="22" cy="106" rx="14" ry="16" fill="none" stroke="#1f7cae" transform="rotate(-35 22 106)" />
    <ellipse cx="88" cy="246" rx="6" ry="10" fill="#4c6434" stroke="#1f8cae" transform="rotate(12 88 246)" />
    <ellipse cx="92" cy="245" rx="5" ry="8" fill="#a4ae34" stroke="#28381c" strokeWidth="1.500" transform="rotate(12 92 245)" />
    <path d="M93 239c-3 3-3 9-2 12" fill="none" stroke="#4c6a1c" strokeWidth="2" />
  </Model>
);

const Axes = () => (
  <Triad width="76" height="76" viewBox="0 0 76 76" aria-label="View axes">
    <path d="M28 47V20" stroke="#186a18" strokeWidth="5" /><path d="M22 25l6-14 6 14z" fill="#1f8a2c" />
    <path d="M29 48l23 6" stroke="#c81818" strokeWidth="4" /><path d="M52 48l12 9-15 2z" fill="#d82828" />
    <path d="M29 48L16 59" stroke="#1818a0" strokeWidth="4" /><path d="M10 62l4-10 8 3-1 7z" fill="#1c1cd0" />
    <g fill="none"><path d="M24 0l3 4 3-4M27 4v6" stroke="#2c9a3a" /><path d="M61 52l7 10M68 52l-7 10" stroke="#e03030" /><path d="M5 62h5l-4 10h5" stroke="#2c2cd8" /></g>
  </Triad>
);

export default function App() {
  return (
    <Window>
      <Global />
      <Gradients />
      <Client>
        <TitleBar>
          <Logo>
            <svg width="22" height="22" viewBox="0 0 22 22" fill="none" stroke="#fff" strokeWidth="1.700" aria-hidden="true">
              <path d="M6 3c4-3 9-2 6 1-1 2-3 3-5 3M4 10c6-2 9 0 7 4-2 3-5 5-9 5l4-9" />
              <path d="M21 8c-4-1-7 0-6 3s4 2 3 5c-1 2-4 3-7 2" />
            </svg>
            <span><b>SOLID</b>WORKS</span>
          </Logo>
          <Menu>
            {['File', 'Edit', 'View', 'Insert', 'Tools', 'Simulation', 'Window', 'Help'].map((m) => (
              <button key={m}>{m}</button>
            ))}
            <button aria-label="Pin menu"><Icon name="pin" size={14} /></button>
          </Menu>
          <Quick>
            {['newdoc', 'open', 'save', 'print', 'undo'].map((n) => (
              <IconDrop key={n} aria-label={n}><Icon name={n} size={17} /><Caret $faint={n === 'undo'} /></IconDrop>
            ))}
            <SplitButton $w="31px" $h="31px">
              <button aria-label="Select"><Icon name="cursor" size={17} /></button>
              <button aria-label="Select options"><Caret /></button>
            </SplitButton>
            <button aria-label="Rebuild"><Icon name="traffic" /></button>
            <WindowControls>
              <span>P...</span>
              <HelpButton aria-label="Help"><Icon name="help" /><Caret /></HelpButton>
              {['min', 'max', 'close'].map((n) => <button key={n} aria-label={n}><Icon name={n} /></button>)}
            </WindowControls>
          </Quick>
        </TitleBar>

        <Ribbon>
          {bigs.map((b, i) => (b ? (
            <Big key={b[1]} $w={b[2]} $drop={b[3]} $off={b[4]}>
              <Icon name={b[0]} /><span>{b[1]}</span>{b[3] && <Caret as="i" />}
            </Big>
          ) : <Rule key={i} />))}
          <Stack $w={143}>
            <Line><Icon name="insight" />Design Insight</Line>
            <Line $off><Icon name="plottools" />Plot Tools<Caret as="i" $faint /></Line>
          </Stack>
          <Rule />
          <Stack>
            <Line><Icon name="report" />Report</Line>
            <Line><Icon name="image" />Include Image for Report</Line>
          </Stack>
        </Ribbon>

        <TabRow>
          {['Assembly', 'Layout', 'Sketch', 'Evaluate', 'SOLIDWORKS Add-Ins', 'Flow Simulation', 'Simulation'].map((t) => (
            <Tab key={t} $on={t === 'Simulation'}>{t}</Tab>
          ))}
          <DocControls>
            {['paneL', 'paneR', 'min', 'restore', 'close'].map((n) => <button key={n} aria-label={n}><Icon name={n} /></button>)}
          </DocControls>
        </TabRow>

        <Body>
          <Panel>
            <ManagerTabs>
              {['feature', 'property', 'config', 'appearance'].map((n, i) => (
                <ManagerTab key={n} $on={i === 0} aria-label={n}><Icon name={n} size={17} /></ManagerTab>
              ))}
              <More aria-label="More managers">»</More>
            </ManagerTabs>
            <FilterLine>
              <FilterBox><Icon name="funnel" size={13} /><Caret /><input aria-label="Filter features" /></FilterBox>
            </FilterLine>
            <Pane $h={68}>
              <Tree $inset>{features.map((f) => <TreeRow key={f.l} item={f} wide />)}</Tree>
              <VScroll>
                <Arrow $v $to="up" />
                <Thumb $v $w={17} $h={18} />
                <Arrow $v $to="down" $last />
              </VScroll>
            </Pane>
            <HScroll><Arrow $to="left" /><Thumb $w={140} $h={18} /><Arrow $to="right" $last /></HScroll>
            <Split />
            <FilterLine $stub>
              <FilterBox><Icon name="funnel" size={13} /><Caret /><input aria-label="Filter study tree" /></FilterBox>
            </FilterLine>
            <Pane>
              <Tree>{tree.map((f, i) => <TreeRow key={i} item={f} />)}</Tree>
              <VScroll>
                <Arrow $v $to="up" />
                <Thumb $v $w={18} $h={58} />
                <Arrow $v $to="down" $last />
              </VScroll>
            </Pane>
            <Collapse aria-label="Collapse panel"><Arrow $to="left" /><Arrow $to="left" /><Arrow $to="left" /></Collapse>
          </Panel>

          <Viewport>
            <HeadsUp>
              {['zoomfit', 'zoomarea', 'prev', 'section', 'orient', '', 'cube', '', 'glasses', '', 'ball', 'scene', '', 'display', ''].map((n, i) => (
                n ? <button key={i} aria-label={n}><Icon name={n} /></button> : <Caret key={i} $faint />
              ))}
            </HeadsUp>
            <Vessel />
            <Axes />
            <ViewName>*Trimetric</ViewName>
            <TaskPane>
              {['home', 'library', 'folder', 'palette', 'ball', 'custom'].map((n) => (
                <TaskTab key={n} $on={n === 'library'} aria-label={n}><Icon name={n} /></TaskTab>
              ))}
            </TaskPane>
          </Viewport>
        </Body>

        <StudyTabs>
          <NavButtons>
            {['M4 3v10M12 3L6 8l6 5z', 'M11 3L5 8l6 5z', 'M5 3l6 5-6 5z', 'M12 3v10M4 3l6 5-6 5z'].map((d) => (
              <button key={d} aria-label="Scroll tabs"><svg width="14" height="14" viewBox="0 0 16 16" fill="#878391" stroke="#878391"><path d={d} /></svg></button>
            ))}
          </NavButtons>
          {studies.map(([label, w, icon, gap, on]) => (
            <StudyTab key={label} $w={w} $icon={icon} $gap={gap} $on={on}>
              {icon && <Icon name={icon} />}{label}
            </StudyTab>
          ))}
        </StudyTabs>

        <FilterBar>
          <Grip />
          {['fgray', 'fgray2', 'fblue'].map((n) => <button key={n} aria-label={n}><Icon name={n} /></button>)}
          <SplitButton $w="27px" $h="23px">
            <button aria-label="Select"><Icon name="cursor" /></button>
            <button aria-label="Select options"><Caret /></button>
          </SplitButton>
          <button aria-label="Select other"><Icon name="cursors" /></button>
          <Divider />
          {filterBases.map((base, i) => (
            <button key={i} aria-label={`Selection filter ${i + 1}`}>
              <svg width="16" height="16" viewBox="0 0 16 16">{base}<Funnel /></svg>
            </button>
          ))}
          <Divider />
        </FilterBar>

        <Status>
          <span>SOLIDWORKS Premium 2015 x64 Edition</span>
          <span>Under Defined</span>
          <span>Editing Assembly</span>
          <StatusEnd>
            <span>IPS</span><Caret as="i" /><Icon name="helpbox" />
            <TagSlot><Icon name="tag" /></TagSlot>
            <SizeGrip />
          </StatusEnd>
        </Status>
      </Client>

      <Markup width="1000" height="300" viewBox="0 0 1000 300" aria-hidden="true">
        <ellipse cx="828" cy="64" rx="55" ry="20" fill="none" stroke="#e01212" strokeWidth="3" />
        <path d="M887 244L851 98" stroke="#f00a0a" strokeWidth="5" />
        <path d="M845 81l14 17-16 4z" fill="#f00a0a" />
      </Markup>
      <Callout>คลิกที่ Report</Callout>
    </Window>
  );
}
